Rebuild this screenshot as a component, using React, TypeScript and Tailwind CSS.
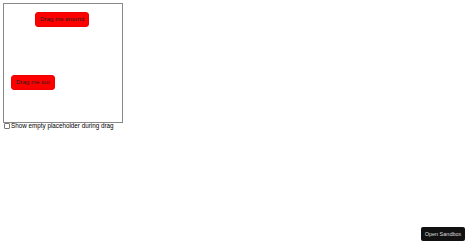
import { useState } from 'react';

const boxes = [
  { id: 'a', top: 8, left: 31, title: 'Drag me around' },
  { id: 'b', top: 71, left: 7, title: 'Drag me too' },
];

export default function App() {
  const [hideSource, setHideSource] = useState(false);

  return (
    <div className="relative h-[248px] w-[474px] bg-white font-['Liberation_Sans',Arial,sans-serif] text-black">
      <div className="pl-[3px] pt-[3px]">
        <div className="relative h-[120px] w-[120px] border border-[#888]">
          {boxes.map((box) => (
            <div
              key={box.id}
              className="absolute flex h-[15px] items-center rounded-[3px] border border-[#e00] bg-[#ff0000] px-[4px] text-[6.1px] leading-none text-[#222]"
              style={{ top: box.top, left: box.left }}
            >
              {box.title}
            </div>
          ))}
        </div>
        <label className="flex items-center gap-[1px] text-[6.3px] leading-none">
          <input
            type="checkbox"
            checked={hideSource}
            onChange={(e) => setHideSource(e.target.checked)}
            className="m-0 ml-[1px] h-[6px] w-[6px] appearance-none rounded-[1px] border border-[#777] bg-white"
          />
          Show empty placeholder during drag
        </label>
      </div>
      <button className="absolute bottom-[7px] right-[9px] flex h-[14px] w-[44px] items-center justify-center rounded-[2px] bg-[#111] text-[5.5px] text-[#ddd]">
        Open Sandbox
      </button>
    </div>
  );
}
